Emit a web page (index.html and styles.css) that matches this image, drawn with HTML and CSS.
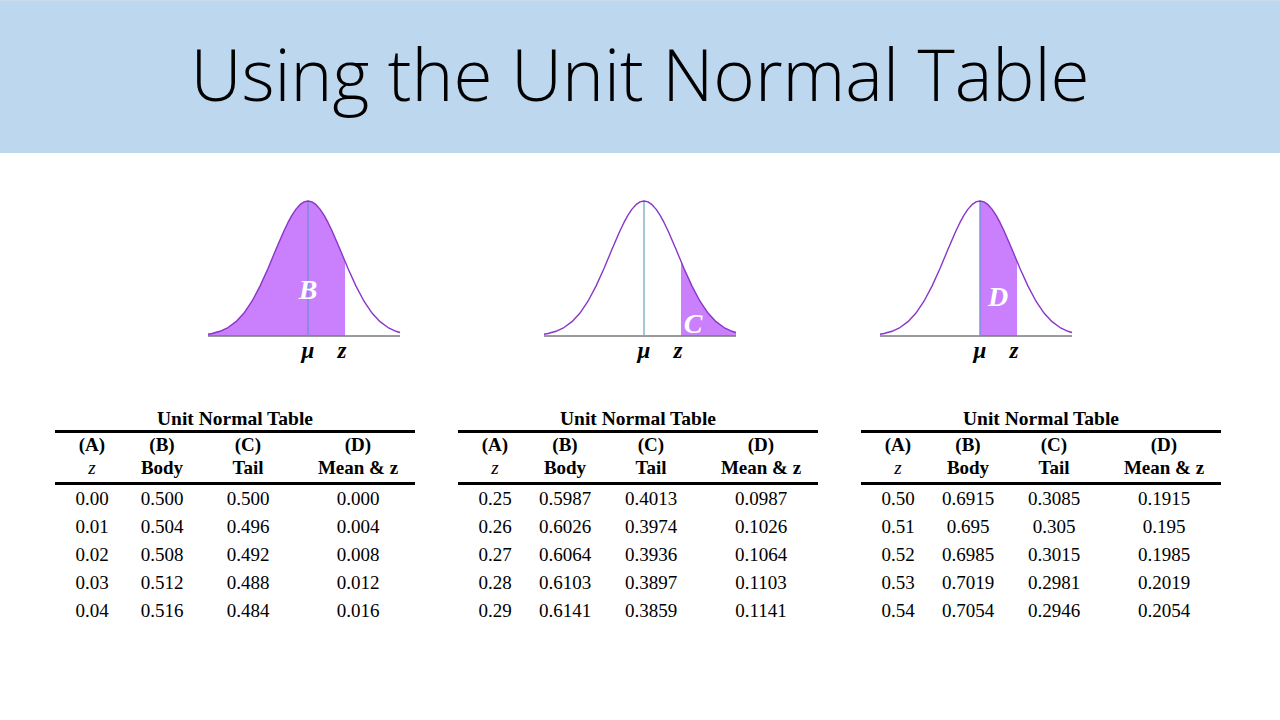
FILE: index.html
```html
<!DOCTYPE html>
<html>
<head>
<meta charset="utf-8">
<link rel="stylesheet" href="styles.css">
</head>
<body>
<header class="banner">
  <h1 class="title">Using the Unit Normal Table</h1>
</header>
<main class="slide">
  <section class="curves">
    <svg class="curve" width="200" height="170" viewBox="0 0 200 170">
      <polygon class="area" points="0,140 0,138.2 4,137.49 12,135.26 20,131.52 28,125.66 36,117.04 44,105.22 52,90.16 60,72.42 68,53.30 76,34.77 80,26.45 84,19.15 88,13.15 92,8.69 96,5.93 100,5 104,5.93 108,8.69 112,13.15 116,19.15 120,26.45 124,34.77 132,53.30 137,65.33 137,140"/>
      <line class="axis" x1="0" y1="140" x2="192" y2="140"/>
      <line class="mean" x1="100" y1="5" x2="100" y2="140"/>
      <polyline class="bell" points="0,138.2 4,137.49 12,135.26 20,131.52 28,125.66 36,117.04 44,105.22 52,90.16 60,72.42 68,53.30 76,34.77 80,26.45 84,19.15 88,13.15 92,8.69 96,5.93 100,5 104,5.93 108,8.69 112,13.15 116,19.15 120,26.45 124,34.77 132,53.30 137,65.33 140,72.42 148,90.16 156,105.22 164,117.04 172,125.66 180,131.52 188,135.26 192,136.53"/>
      <text class="region" x="100" y="103">B</text>
      <text class="sym" x="100" y="162">μ</text>
      <text class="sym" x="134" y="162">z</text>
    </svg>
    <svg class="curve" width="200" height="170" viewBox="0 0 200 170">
      <polygon class="area" points="137,140 137,65.33 140,72.42 148,90.16 156,105.22 164,117.04 172,125.66 180,131.52 188,135.26 192,136.53 192,140"/>
      <line class="axis" x1="0" y1="140" x2="192" y2="140"/>
      <line class="mean teal" x1="100" y1="5" x2="100" y2="140"/>
      <polyline class="bell" points="0,138.2 4,137.49 12,135.26 20,131.52 28,125.66 36,117.04 44,105.22 52,90.16 60,72.42 68,53.30 76,34.77 80,26.45 84,19.15 88,13.15 92,8.69 96,5.93 100,5 104,5.93 108,8.69 112,13.15 116,19.15 120,26.45 124,34.77 132,53.30 137,65.33 140,72.42 148,90.16 156,105.22 164,117.04 172,125.66 180,131.52 188,135.26 192,136.53"/>
      <text class="region" x="149" y="137">C</text>
      <text class="sym" x="100" y="162">μ</text>
      <text class="sym" x="134" y="162">z</text>
    </svg>
    <svg class="curve" width="200" height="170" viewBox="0 0 200 170">
      <polygon class="area" points="100,140 100,5 104,5.93 108,8.69 112,13.15 116,19.15 120,26.45 124,34.77 132,53.30 137,65.33 137,140"/>
      <line class="axis" x1="0" y1="140" x2="192" y2="140"/>
      <line class="mean" x1="100" y1="5" x2="100" y2="140"/>
      <polyline class="bell" points="0,138.2 4,137.49 12,135.26 20,131.52 28,125.66 36,117.04 44,105.22 52,90.16 60,72.42 68,53.30 76,34.77 80,26.45 84,19.15 88,13.15 92,8.69 96,5.93 100,5 104,5.93 108,8.69 112,13.15 116,19.15 120,26.45 124,34.77 132,53.30 137,65.33 140,72.42 148,90.16 156,105.22 164,117.04 172,125.66 180,131.52 188,135.26 192,136.53"/>
      <text class="region" x="118" y="110">D</text>
      <text class="sym" x="100" y="162">μ</text>
      <text class="sym" x="134" y="162">z</text>
    </svg>
  </section>

  <section class="tables">
    <table class="unt">
      <caption>Unit Normal Table</caption>
      <colgroup><col class="ca"><col class="cb"><col class="cc"><col class="cd"></colgroup>
      <thead>
        <tr class="h1"><th>(A)</th><th>(B)</th><th>(C)</th><th>(D)</th></tr>
        <tr class="h2"><th><i>z</i></th><th>Body</th><th>Tail</th><th>Mean &amp; z</th></tr>
      </thead>
      <tbody>
        <tr><td>0.00</td><td>0.500</td><td>0.500</td><td>0.000</td></tr>
        <tr><td>0.01</td><td>0.504</td><td>0.496</td><td>0.004</td></tr>
        <tr><td>0.02</td><td>0.508</td><td>0.492</td><td>0.008</td></tr>
        <tr><td>0.03</td><td>0.512</td><td>0.488</td><td>0.012</td></tr>
        <tr><td>0.04</td><td>0.516</td><td>0.484</td><td>0.016</td></tr>
      </tbody>
    </table>
    <table class="unt">
      <caption>Unit Normal Table</caption>
      <colgroup><col class="ca"><col class="cb"><col class="cc"><col class="cd"></colgroup>
      <thead>
        <tr class="h1"><th>(A)</th><th>(B)</th><th>(C)</th><th>(D)</th></tr>
        <tr class="h2"><th><i>z</i></th><th>Body</th><th>Tail</th><th>Mean &amp; z</th></tr>
      </thead>
      <tbody>
        <tr><td>0.25</td><td>0.5987</td><td>0.4013</td><td>0.0987</td></tr>
        <tr><td>0.26</td><td>0.6026</td><td>0.3974</td><td>0.1026</td></tr>
        <tr><td>0.27</td><td>0.6064</td><td>0.3936</td><td>0.1064</td></tr>
        <tr><td>0.28</td><td>0.6103</td><td>0.3897</td><td>0.1103</td></tr>
        <tr><td>0.29</td><td>0.6141</td><td>0.3859</td><td>0.1141</td></tr>
      </tbody>
    </table>
    <table class="unt">
      <caption>Unit Normal Table</caption>
      <colgroup><col class="ca"><col class="cb"><col class="cc"><col class="cd"></colgroup>
      <thead>
        <tr class="h1"><th>(A)</th><th>(B)</th><th>(C)</th><th>(D)</th></tr>
        <tr class="h2"><th><i>z</i></th><th>Body</th><th>Tail</th><th>Mean &amp; z</th></tr>
      </thead>
      <tbody>
        <tr><td>0.50</td><td>0.6915</td><td>0.3085</td><td>0.1915</td></tr>
        <tr><td>0.51</td><td>0.695</td><td>0.305</td><td>0.195</td></tr>
        <tr><td>0.52</td><td>0.6985</td><td>0.3015</td><td>0.1985</td></tr>
        <tr><td>0.53</td><td>0.7019</td><td>0.2981</td><td>0.2019</td></tr>
        <tr><td>0.54</td><td>0.7054</td><td>0.2946</td><td>0.2054</td></tr>
      </tbody>
    </table>
  </section>
</main>
</body>
</html>
```
FILE: styles.css
```css
html, body {
  margin: 0;
  padding: 0;
  background: #ffffff;
}
body {
  width: 1280px;
  height: 720px;
  overflow: hidden;
  font-family: "Liberation Serif", "Times New Roman", serif;
  color: #000;
}
.banner {
  height: 153px;
  box-sizing: border-box;
  padding-top: 37px;
  background: #bdd7ee;
  border-top: 1px solid #c9dcec;
}
.title {
  margin: 0;
  text-align: center;
  font-family: "Open Sans", "Liberation Sans", sans-serif;
  font-weight: 300;
  font-size: 71px;
  line-height: 71px;
  color: #000;
}
.slide {
  display: flex;
  flex-direction: column;
}
.curves {
  display: flex;
  justify-content: center;
  gap: 136px;
  padding-top: 43px;
  padding-left: 8px;
}
.curve {
  display: block;
  overflow: visible;
}
.area {
  fill: #ca7ffc;
  stroke: none;
}
.axis {
  stroke: #7a7a7a;
  stroke-width: 1.5;
}
.mean {
  stroke: #6f8fd6;
  stroke-width: 1.3;
}
.mean.teal {
  stroke: #74abc4;
}
.bell {
  fill: none;
  stroke: #8a35c8;
  stroke-width: 1.4;
  stroke-linejoin: round;
}
.region {
  fill: #ffffff;
  font-family: "Liberation Serif", serif;
  font-style: italic;
  font-weight: bold;
  font-size: 28px;
  text-anchor: middle;
}
.sym {
  fill: #000;
  font-family: "Liberation Serif", serif;
  font-style: italic;
  font-weight: bold;
  font-size: 23px;
  text-anchor: middle;
}
.tables {
  display: flex;
  justify-content: center;
  gap: 43px;
  padding-top: 42px;
  padding-right: 4px;
}
.unt {
  width: 360px;
  border-collapse: collapse;
  table-layout: fixed;
  font-size: 19px;
}
.unt caption {
  font-weight: bold;
  font-size: 19.5px;
  line-height: 22px;
  text-align: center;
}
.ca { width: 74px; }
.cb { width: 66px; }
.cc { width: 106px; }
.cd { width: 114px; }
.unt th, .unt td {
  padding: 0;
  text-align: center;
  white-space: nowrap;
}
.unt thead {
  border-top: 3px solid #000;
  border-bottom: 3px solid #000;
}
.unt th {
  font-weight: bold;
  line-height: 23px;
}
.unt .h2 th {
  padding-bottom: 3px;
}
.unt .h2 i {
  font-weight: normal;
}
.unt td {
  line-height: 28px;
}
```
